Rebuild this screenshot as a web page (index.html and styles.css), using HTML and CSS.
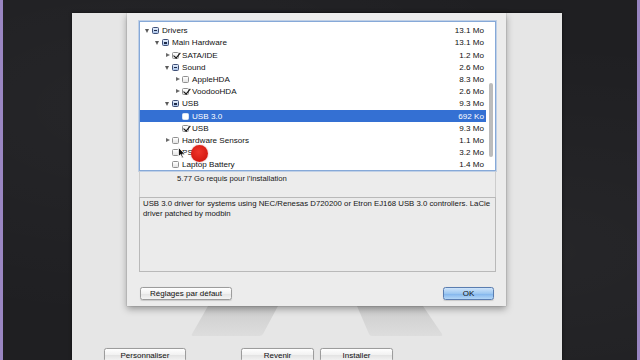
FILE: index.html
```html
<!DOCTYPE html>
<html lang="fr">
<head>
<meta charset="utf-8">
<title>Personnaliser l'installation</title>
<link rel="stylesheet" href="styles.css">
</head>
<body>
<div class="screen">
  <div class="window">
    <div class="sheet">
      <div class="tree">
        <div class="rows">
          <div class="row l0"><span class="tw down"></span><span class="cb mixed"></span><span class="name">Drivers</span><span class="size">13.1 Mo</span></div>
          <div class="row l1"><span class="tw down"></span><span class="cb mixed"></span><span class="name">Main Hardware</span><span class="size">13.1 Mo</span></div>
          <div class="row l2"><span class="tw right"></span><span class="cb checked"></span><span class="name">SATA/IDE</span><span class="size">1.2 Mo</span></div>
          <div class="row l2"><span class="tw down"></span><span class="cb mixed"></span><span class="name">Sound</span><span class="size">2.6 Mo</span></div>
          <div class="row l3"><span class="tw right"></span><span class="cb"></span><span class="name">AppleHDA</span><span class="size">8.3 Mo</span></div>
          <div class="row l3"><span class="tw right"></span><span class="cb checked"></span><span class="name">VoodooHDA</span><span class="size">2.6 Mo</span></div>
          <div class="row l2"><span class="tw down"></span><span class="cb mixed"></span><span class="name">USB</span><span class="size">9.3 Mo</span></div>
          <div class="row l3 selected"><span class="tw"></span><span class="cb"></span><span class="name">USB 3.0</span><span class="size">692 Ko</span></div>
          <div class="row l3"><span class="tw"></span><span class="cb checked"></span><span class="name">USB</span><span class="size">9.3 Mo</span></div>
          <div class="row l2"><span class="tw right"></span><span class="cb"></span><span class="name">Hardware Sensors</span><span class="size">1.1 Mo</span></div>
          <div class="row l2"><span class="tw"></span><span class="cb"></span><span class="name">PS/2</span><span class="size">3.2 Mo</span></div>
          <div class="row l2"><span class="tw"></span><span class="cb"></span><span class="name">Laptop Battery</span><span class="size">1.4 Mo</span></div>
        </div>
        <div class="scrollbar"><div class="thumb"></div></div>
      </div>
      <div class="summary">5.77 Go requis pour l’installation</div>
      <div class="desc">USB 3.0 driver for systems using NEC/Renesas D720200 or Etron EJ168 USB 3.0 controllers. LaCie driver patched by modbin</div>
      <div class="sheet-buttons">
        <button class="btn reset">Réglages par défaut</button>
        <button class="btn ok">OK</button>
      </div>
    </div>
    <div class="stand">
      <svg width="490" height="42" viewBox="0 0 490 42">
        <defs>
          <linearGradient id="sg" x1="0" y1="0" x2="0" y2="1">
            <stop offset="0" stop-color="#cdcdcd"/>
            <stop offset="1" stop-color="#dddddd"/>
          </linearGradient>
        </defs>
        <path d="M136 0 L206 0 L191 28 Q190 30 187 30 L121 30 Q119 30 120 28 Z" fill="url(#sg)"/>
        <path d="M285 0 L351 0 L370 28 Q371 30 368 30 L300 30 Q298 30 297 28 Z" fill="url(#sg)"/>
      </svg>
    </div>
    <div class="actions">
      <button class="btn custom">Personnaliser</button>
      <button class="btn back">Revenir</button>
      <button class="btn install">Installer</button>
    </div>
  </div>
  <div class="click-dot"></div>
  <svg class="cursor" width="8" height="12" viewBox="0 0 8 12">
    <path d="M0.5 0.5 L0.5 9.5 L2.6 7.6 L4 11 L5.4 10.4 L4 7.2 L7 7.2 Z" fill="#111" stroke="#fff" stroke-width="0.8"/>
  </svg>
</div>
</body>
</html>
```
FILE: styles.css
```css
* { box-sizing: border-box; }
html, body { margin: 0; padding: 0; }
body {
  width: 640px;
  height: 360px;
  overflow: hidden;
  font-family: "Liberation Sans", Arial, sans-serif;
  background: #1e1e21;
}
.screen {
  position: relative;
  width: 640px;
  height: 360px;
  display: flex;
  padding-left: 69px;
  border-left: 3px solid #9a86c2;
  border-right: 3px solid #9a86c2;
  background:
    radial-gradient(ellipse at 20% 30%, rgba(255,255,255,0.03), transparent 60%),
    radial-gradient(ellipse at 85% 70%, rgba(255,255,255,0.03), transparent 60%),
    #1f1f22;
}
.window {
  width: 490px;
  margin-top: 13px;
  height: 347px;
  background: #e6e6e6;
  padding-left: 55px;
  display: flex;
  flex-direction: column;
  box-shadow: 0 0 3px rgba(0,0,0,0.6);
}
.sheet {
  position: relative;
  z-index: 1;
  width: 379px;
  height: 293px;
  background: #ececec;
  padding: 8px 10px 6px 12px;
  display: flex;
  flex-direction: column;
  box-shadow: 0 3px 7px rgba(0,0,0,0.35), 0 0 1px rgba(0,0,0,0.4);
}
.tree {
  height: 150px;
  display: flex;
  background: #fff;
  border: 1px solid #86a9d8;
  box-shadow: 0 0 0 1px rgba(140,175,225,0.45);
}
.rows {
  flex: 1;
  padding-top: 2.6px;
  overflow: hidden;
}
.row {
  height: 12.2px;
  display: flex;
  align-items: center;
  font-size: 8.1px;
  color: #111;
  padding-right: 2px;
  white-space: nowrap;
}
.row.l0 { padding-left: 5px; }
.row.l1 { padding-left: 15px; }
.row.l2 { padding-left: 25px; }
.row.l3 { padding-left: 35px; }
.row.selected { background: #3470d3; color: #fff; }
.tw {
  width: 4px;
  height: 5px;
  margin-right: 3px;
  flex: none;
  position: relative;
}
.tw.down::before {
  content: "";
  position: absolute;
  left: -0.5px; top: 1px;
  border-left: 2.5px solid transparent;
  border-right: 2.5px solid transparent;
  border-top: 4px solid #5a5a5a;
}
.tw.right::before {
  content: "";
  position: absolute;
  left: 0.5px; top: 0;
  border-top: 2.5px solid transparent;
  border-bottom: 2.5px solid transparent;
  border-left: 4px solid #6a6a6a;
}
.cb {
  width: 7px;
  height: 7px;
  margin-right: 3px;
  flex: none;
  position: relative;
  border: 1px solid #909090;
  border-radius: 1.5px;
  background: linear-gradient(#ffffff, #e4e4e4);
}
.cb.mixed {
  border-color: #3e4f78;
  background: linear-gradient(#e2ecfa, #a9c3e8);
}
.cb.mixed::after {
  content: "";
  position: absolute;
  left: 1px; right: 1px; top: 2px;
  height: 1.2px;
  background: #1e2a48;
}
.cb.checked::after {
  content: "";
  position: absolute;
  left: 1.5px; top: -2px;
  width: 2.5px;
  height: 6px;
  border-right: 1.4px solid #111;
  border-bottom: 1.4px solid #111;
  transform: rotate(40deg);
}
.selected .cb { border-color: #d8e4f6; background: #fff; }
.name { flex: 1; }
.size { text-align: right; }
.scrollbar {
  width: 9px;
  flex: none;
  padding: 61px 2px 0 3px;
}
.thumb {
  width: 4px;
  height: 74px;
  border-radius: 2px;
  background: #bcbcbc;
}
.summary {
  height: 26px;
  border-left: 1px solid #cdcdcd;
  border-right: 1px solid #cdcdcd;
  padding: 3px 0 0 37px;
  font-size: 7.7px;
  line-height: 10px;
  color: #1a1a1a;
}
.desc {
  height: 75px;
  border: 1px solid #b9b9b9;
  background: #ebebeb;
  padding: 1px 3px;
  font-size: 7.8px;
  line-height: 10.4px;
  color: #151515;
}
.sheet-buttons {
  margin-top: 15px;
  display: flex;
  justify-content: space-between;
  padding-left: 1px;
  padding-right: 2px;
}
.btn {
  height: 13px;
  padding: 0;
  font-family: "Liberation Sans", Arial, sans-serif;
  font-size: 8px;
  color: #111;
  border: 1px solid #9c9c9c;
  border-radius: 2.5px;
  background: linear-gradient(#ffffff, #f1f1f1 50%, #e3e3e3 51%, #f4f4f4);
  box-shadow: 0 0.5px 1px rgba(0,0,0,0.15);
}
.btn.reset { width: 92px; }
.btn.ok {
  width: 51px;
  border-color: #5a7db0;
  background: linear-gradient(#cfe4fa, #9cc7f1 50%, #7fb3ec 51%, #b4d7f7);
}
.stand {
  height: 42px;
  margin-left: -55px;
}
.stand svg { display: block; }
.actions {
  margin-left: -55px;
  padding-left: 32px;
  display: flex;
}
.actions .btn { height: 14px; }
.btn.custom { width: 82px; }
.btn.back { width: 73px; margin-left: 55px; }
.btn.install { width: 73px; margin-left: 6px; }
.click-dot {
  position: absolute;
  z-index: 5;
  left: 188px;
  top: 144.5px;
  width: 17px;
  height: 17px;
  border-radius: 50%;
  background: radial-gradient(circle at 45% 40%, #f0352a, #d81d14 60%, #c41810);
  box-shadow: 0 0 1.5px rgba(200,20,10,0.6);
}
.cursor {
  position: absolute;
  z-index: 6;
  left: 175px;
  top: 147px;
}
```
